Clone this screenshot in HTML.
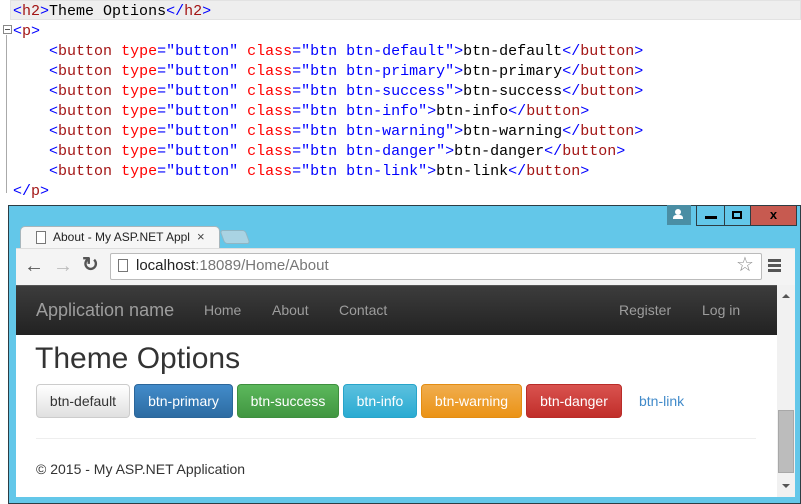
<!DOCTYPE html>
<html><head><style>
*{margin:0;padding:0;box-sizing:border-box}
body{width:801px;height:504px;overflow:hidden;background:#fff;position:relative;font-family:"Liberation Sans",sans-serif}
.code{position:absolute;left:13px;top:2px;font-family:"Liberation Mono",monospace;font-size:15px;line-height:20px;white-space:pre;color:#000}
.hl{position:absolute;left:10px;top:0;width:791px;height:20px;background:#eeeeee;border:1px solid #e2e2e2}
.t{color:#00f}.n{color:#a31515}.a{color:#f00}.v{color:#00f}
.abs{position:absolute}
.btn{position:absolute;top:384px;height:34px;border-radius:4px;font-size:14px;line-height:32px;text-align:center;color:#fff;border:1px solid}
</style></head><body>
<div class="hl"></div>
<div class="abs" style="left:3px;top:25px;width:9px;height:9px;border:1px solid #888;background:#fff"></div>
<div class="abs" style="left:5px;top:29px;width:5px;height:1px;background:#555"></div>
<div class="abs" style="left:6px;top:35px;width:1px;height:158px;background:#aaa"></div>
<div class="code"><span class="t">&lt;</span><span class="n">h2</span><span class="t">&gt;</span>Theme Options<span class="t">&lt;/</span><span class="n">h2</span><span class="t">&gt;</span>
<span class="t">&lt;</span><span class="n">p</span><span class="t">&gt;</span>
    <span class="t">&lt;</span><span class="n">button</span> <span class="a">type</span><span class="t">="button"</span> <span class="a">class</span><span class="t">="btn btn-default"&gt;</span>btn-default<span class="t">&lt;/</span><span class="n">button</span><span class="t">&gt;</span>
    <span class="t">&lt;</span><span class="n">button</span> <span class="a">type</span><span class="t">="button"</span> <span class="a">class</span><span class="t">="btn btn-primary"&gt;</span>btn-primary<span class="t">&lt;/</span><span class="n">button</span><span class="t">&gt;</span>
    <span class="t">&lt;</span><span class="n">button</span> <span class="a">type</span><span class="t">="button"</span> <span class="a">class</span><span class="t">="btn btn-success"&gt;</span>btn-success<span class="t">&lt;/</span><span class="n">button</span><span class="t">&gt;</span>
    <span class="t">&lt;</span><span class="n">button</span> <span class="a">type</span><span class="t">="button"</span> <span class="a">class</span><span class="t">="btn btn-info"&gt;</span>btn-info<span class="t">&lt;/</span><span class="n">button</span><span class="t">&gt;</span>
    <span class="t">&lt;</span><span class="n">button</span> <span class="a">type</span><span class="t">="button"</span> <span class="a">class</span><span class="t">="btn btn-warning"&gt;</span>btn-warning<span class="t">&lt;/</span><span class="n">button</span><span class="t">&gt;</span>
    <span class="t">&lt;</span><span class="n">button</span> <span class="a">type</span><span class="t">="button"</span> <span class="a">class</span><span class="t">="btn btn-danger"&gt;</span>btn-danger<span class="t">&lt;/</span><span class="n">button</span><span class="t">&gt;</span>
    <span class="t">&lt;</span><span class="n">button</span> <span class="a">type</span><span class="t">="button"</span> <span class="a">class</span><span class="t">="btn btn-link"&gt;</span>btn-link<span class="t">&lt;/</span><span class="n">button</span><span class="t">&gt;</span>
<span class="t">&lt;/</span><span class="n">p</span><span class="t">&gt;</span></div>

<div class="abs" style="left:8px;top:205px;width:793px;height:299px;background:#63c7e9;border:1px solid #2d3d44"></div>
<div class="abs" style="left:667px;top:205px;width:24px;height:20px;background:#4a8ea4"></div>
<div class="abs" style="left:675px;top:209px;width:6px;height:6px;border-radius:50%;background:#fff"></div>
<div class="abs" style="left:673px;top:215px;width:10px;height:4px;border-radius:3px 3px 0 0;background:#fff"></div>
<div class="abs" style="left:696px;top:205px;width:29px;height:21px;border:1px solid #2d3d44;background:#63c7e9"></div>
<div class="abs" style="left:705px;top:216px;width:12px;height:3px;background:#000"></div>
<div class="abs" style="left:724px;top:205px;width:27px;height:21px;border:1px solid #2d3d44;background:#63c7e9"></div>
<div class="abs" style="left:732px;top:211px;width:10px;height:8px;border:2px solid #000"></div>
<div class="abs" style="left:750px;top:205px;width:47px;height:21px;border:1px solid #2d3d44;background:#c75a50;color:#000;font-weight:bold;font-size:13px;text-align:center;line-height:18px">x</div>

<div class="abs" style="left:20px;top:226px;width:200px;height:24px;background:#f6f6f6;border:1px solid #a8b6bc;border-bottom:none;border-radius:5px 5px 0 0"></div>
<div class="abs" style="left:36px;top:231px;width:10px;height:13px;border:1px solid #777;background:#fff"></div>
<div class="abs" style="left:53px;top:229px;font-size:12px;color:#222;line-height:16px">About - My ASP.NET Appl</div>
<div class="abs" style="left:197px;top:229px;font-size:13px;color:#444;line-height:16px">×</div>
<div class="abs" style="left:222px;top:230px;width:26px;height:14px;background:#a9d3e3;border:1px solid #8fb6c4;border-radius:3px;transform:skewX(20deg)"></div>

<div class="abs" style="left:16px;top:248px;width:779px;height:38px;background:#f4f4f4;border-top:1px solid #ddd"></div>
<div class="abs" style="left:24px;top:255px;font-size:20px;color:#555;line-height:22px;font-weight:bold">←</div>
<div class="abs" style="left:53px;top:255px;font-size:20px;color:#bbb;line-height:22px;font-weight:bold">→</div>
<div class="abs" style="left:82px;top:254px;font-size:20px;color:#555;line-height:22px;font-weight:bold">↻</div>
<div class="abs" style="left:110px;top:253px;width:652px;height:27px;background:#fff;border:1px solid #bbb;border-radius:2px"></div>
<div class="abs" style="left:118px;top:259px;width:10px;height:13px;border:1px solid #777"></div>
<div class="abs" style="left:136px;top:257px;font-size:15px;line-height:18px;color:#222">localhost<span style="color:#777">:18089/Home/About</span></div>
<div class="abs" style="left:736px;top:254px;font-size:20px;color:#888;line-height:22px">☆</div>
<div class="abs" style="left:768px;top:259px;width:13px;height:3px;background:#555;box-shadow:0 5px 0 #555,0 10px 0 #555"></div>

<div class="abs" style="left:16px;top:285px;width:761px;height:212px;background:#fff"></div>
<div class="abs" style="left:16px;top:285px;width:761px;height:50px;background:linear-gradient(#3c3c3c,#222);border-top:1px solid #555"></div>
<div class="abs" style="left:36px;top:300px;font-size:18px;color:#9d9d9d;line-height:20px">Application name</div>
<div class="abs" style="left:204px;top:302px;font-size:14px;color:#9d9d9d;line-height:16px">Home</div>
<div class="abs" style="left:272px;top:302px;font-size:14px;color:#9d9d9d;line-height:16px">About</div>
<div class="abs" style="left:339px;top:302px;font-size:14px;color:#9d9d9d;line-height:16px">Contact</div>
<div class="abs" style="left:619px;top:302px;font-size:14px;color:#9d9d9d;line-height:16px">Register</div>
<div class="abs" style="left:702px;top:302px;font-size:14px;color:#9d9d9d;line-height:16px">Log in</div>
<div class="abs" style="left:777px;top:285px;width:18px;height:212px;background:#f1f1f1"></div>
<div class="abs" style="left:782px;top:294px;border:4px solid transparent;border-bottom:4px solid #555;border-top:none"></div>
<div class="abs" style="left:778px;top:410px;width:16px;height:63px;background:#bcbcbc;border:1px solid #a8a8a8"></div>
<div class="abs" style="left:782px;top:484px;border:4px solid transparent;border-top:4px solid #555;border-bottom:none"></div>

<div class="abs" style="left:35px;top:342px;font-size:30px;color:#333;line-height:34px">Theme Options</div>
<div class="btn" style="left:36px;width:94px;color:#333;background:linear-gradient(#fff,#e0e0e0);border-color:#ccc">btn-default</div>
<div class="btn" style="left:134px;width:99px;background:linear-gradient(#428bca,#2d6ca2);border-color:#2b669a">btn-primary</div>
<div class="btn" style="left:237px;width:102px;background:linear-gradient(#5cb85c,#419641);border-color:#3e8f3e">btn-success</div>
<div class="btn" style="left:343px;width:74px;background:linear-gradient(#5bc0de,#2aabd2);border-color:#28a4c9">btn-info</div>
<div class="btn" style="left:421px;width:101px;background:linear-gradient(#f0ad4e,#eb9316);border-color:#e38d13">btn-warning</div>
<div class="btn" style="left:526px;width:96px;background:linear-gradient(#d9534f,#c12e2a);border-color:#b92c28">btn-danger</div>
<div class="abs" style="left:639px;top:393px;font-size:14px;color:#428bca;line-height:16px">btn-link</div>
<div class="abs" style="left:36px;top:438px;width:720px;height:1px;background:#eee"></div>
<div class="abs" style="left:36px;top:461px;font-size:14px;color:#333;line-height:16px">© 2015 - My ASP.NET Application</div>
</body></html>
